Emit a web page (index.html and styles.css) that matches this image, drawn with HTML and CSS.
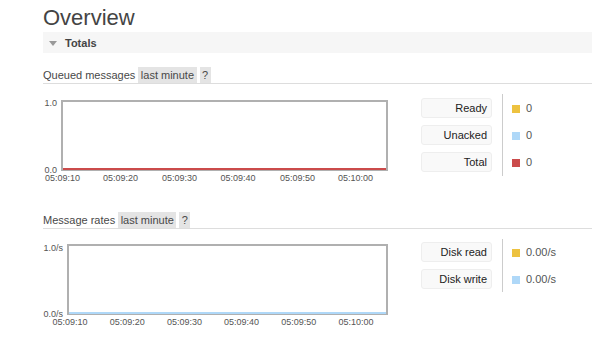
FILE: index.html
```html
<!DOCTYPE html>
<html>
<head>
  <title>Overview</title>
  <link rel="stylesheet" href="styles.css">
</head>
<body>
  <div class="main">
    <h1>Overview</h1>
    <div class="section-bar">
      <span class="arrow"></span>
      <span class="section-title">Totals</span>
    </div>

    <div class="section">
      <div class="section-head">
        <span class="head-label">Queued messages</span>
        <span class="badge">last minute</span>
        <span class="badge">?</span>
      </div>
      <div class="chart-row">
        <svg class="chart" width="345" height="92" viewBox="0 0 345 92">
          <rect x="19" y="7" width="325" height="69" fill="#fff" stroke="#b0b0b0" stroke-width="2"/>
          <line x1="20" y1="75" x2="343" y2="75" stroke="#cb4b4b" stroke-width="2"/>
          <g class="axis">
            <text x="14" y="9" text-anchor="end">1.0</text>
            <text x="14" y="75.5" text-anchor="end">0.0</text>
            <text x="19.5" y="84" text-anchor="middle">05:09:10</text>
            <text x="77.5" y="84" text-anchor="middle">05:09:20</text>
            <text x="136.5" y="84" text-anchor="middle">05:09:30</text>
            <text x="195" y="84" text-anchor="middle">05:09:40</text>
            <text x="254.5" y="84" text-anchor="middle">05:09:50</text>
            <text x="312.5" y="84" text-anchor="middle">05:10:00</text>
          </g>
        </svg>
        <div class="legend legend-queued">
          <div class="legend-names">
            <div class="legend-btn">Ready</div>
            <div class="legend-btn">Unacked</div>
            <div class="legend-btn">Total</div>
          </div>
          <div class="legend-values">
            <div class="legend-val"><span class="swatch yellow"></span>0</div>
            <div class="legend-val"><span class="swatch blue"></span>0</div>
            <div class="legend-val"><span class="swatch red"></span>0</div>
          </div>
        </div>
      </div>
    </div>

    <div class="section">
      <div class="section-head">
        <span class="head-label">Message rates</span>
        <span class="badge">last minute</span>
        <span class="badge">?</span>
      </div>
      <div class="chart-row">
        <svg class="chart" width="345" height="90" viewBox="0 0 345 90">
          <rect x="25" y="6" width="319" height="69" fill="#fff" stroke="#b0b0b0" stroke-width="2"/>
          <line x1="26" y1="74" x2="343" y2="74" stroke="#afd8f8" stroke-width="2"/>
          <g class="axis">
            <text x="20" y="8.5" text-anchor="end">1.0/s</text>
            <text x="20" y="74.5" text-anchor="end">0.0/s</text>
            <text x="27" y="83" text-anchor="middle">05:09:10</text>
            <text x="84.2" y="83" text-anchor="middle">05:09:20</text>
            <text x="141.4" y="83" text-anchor="middle">05:09:30</text>
            <text x="198.6" y="83" text-anchor="middle">05:09:40</text>
            <text x="255.8" y="83" text-anchor="middle">05:09:50</text>
            <text x="313" y="83" text-anchor="middle">05:10:00</text>
          </g>
        </svg>
        <div class="legend legend-rates">
          <div class="legend-names">
            <div class="legend-btn">Disk read</div>
            <div class="legend-btn">Disk write</div>
          </div>
          <div class="legend-values">
            <div class="legend-val"><span class="swatch yellow"></span>0.00/s</div>
            <div class="legend-val"><span class="swatch blue"></span>0.00/s</div>
          </div>
        </div>
      </div>
    </div>
  </div>
</body>
</html>
```

FILE: styles.css
```css
body {
  margin: 0;
  background-color: #fff;
  font-family: 'Liberation Sans', Arial, sans-serif;
  font-size: 11px;
  color: #484848;
}

.main {
  padding: 5px 0 0 43px;
}

h1 {
  margin: 0 0 1px;
  font-size: 22px;
  line-height: 26px;
  font-weight: normal;
  color: #444;
}

.section-bar {
  display: flex;
  align-items: center;
  height: 21px;
  background-color: #f6f6f6;
}

.arrow {
  width: 0;
  height: 0;
  margin: 1px 0 0 6px;
  border-left: 4.5px solid transparent;
  border-right: 4.5px solid transparent;
  border-top: 5px solid #999;
}

.section-title {
  margin-left: 8px;
  font-weight: bold;
  color: #444;
}

.section {
  margin-top: 14px;
}

.section-head {
  display: flex;
  align-items: baseline;
  gap: 3px;
  border-bottom: 1px solid #ddd;
}

.head-label {
  line-height: 16px;
}

.badge {
  padding: 1px 2.5px;
  line-height: 14px;
  background-color: #e4e4e4;
}

.chart-row {
  display: flex;
  align-items: flex-start;
  margin-top: 10px;
  padding-bottom: 12px;
}

.chart {
  display: block;
  flex-shrink: 0;
}

.axis text {
  font-family: 'Liberation Sans', Arial, sans-serif;
  font-size: 9px;
  fill: #545454;
  dominant-baseline: central;
}

.legend {
  display: flex;
  margin-left: 33px;
}

.legend-names {
  display: flex;
  flex-direction: column;
  gap: 7px;
  padding: 4px 10px 4px 0;
}

.legend-rates .legend-names {
  padding-top: 3px;
  padding-bottom: 3px;
}

.legend-btn {
  box-sizing: border-box;
  width: 71px;
  height: 20px;
  padding-right: 4px;
  line-height: 18px;
  text-align: right;
  color: #222;
  background-color: #f9f9f9;
  border: 1px solid #eee;
  border-radius: 3px;
}

.legend-values {
  display: flex;
  flex-direction: column;
  gap: 7px;
  padding: 4px 0 0 9px;
  border-left: 1px solid #ccc;
}

.legend-rates .legend-values {
  padding-top: 3px;
}

.legend-val {
  display: flex;
  align-items: center;
  height: 20px;
  line-height: 18px;
  color: #555;
}

.swatch {
  width: 8px;
  height: 8px;
  margin: 2px 6px 0 0;
}

.yellow { background-color: #edc240; }
.blue { background-color: #afd8f8; }
.red { background-color: #cb4b4b; }
```
